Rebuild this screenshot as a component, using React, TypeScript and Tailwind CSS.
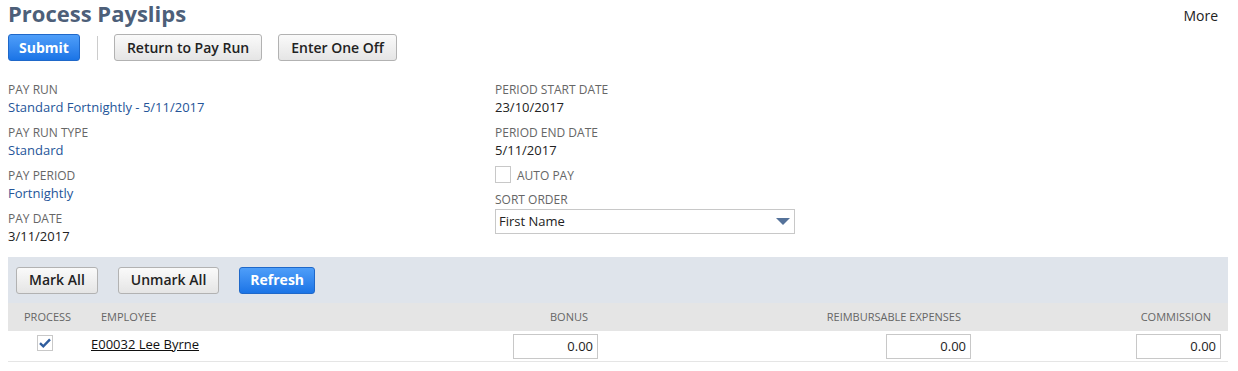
import React from "react";

const font = { fontFamily: '"Open Sans", "Liberation Sans", sans-serif' };

function GrayBtn({ children }: { children: React.ReactNode }) {
  return (
    <button className="h-[27px] px-[12px] rounded-[3px] border border-[#b2b2b2] bg-gradient-to-b from-[#fafafa] to-[#e5e5e5] text-[14px] font-semibold text-[#222] leading-none whitespace-nowrap">
      {children}
    </button>
  );
}

function BlueBtn({ children }: { children: React.ReactNode }) {
  return (
    <button className="h-[27px] px-[10px] rounded-[3px] border border-[#1f68c9] bg-gradient-to-b from-[#4e9ef9] to-[#1a74e6] text-[14px] font-bold text-white leading-none whitespace-nowrap">
      {children}
    </button>
  );
}

function Field({ label, value, blue }: { label: string; value: string; blue?: boolean }) {
  return (
    <div className="h-[43px]">
      <div className="text-[12px] leading-[17px] text-[#666] uppercase">{label}</div>
      <div className={`text-[13px] leading-[18px] ${blue ? "text-[#255599]" : "text-[#222]"}`}>{value}</div>
    </div>
  );
}

function NumBox() {
  return (
    <div className="w-[85px] h-[25px] border border-[#c8c8c8] bg-white text-right text-[13px] pr-[4px] leading-[23px] text-[#222]">
      0.00
    </div>
  );
}

export default function App() {
  return (
    <div className="w-[1238px] h-[371px] bg-white pl-[8px] pr-[10px] overflow-hidden" style={font}>
      <div className="flex justify-between items-start h-[26px] pt-[1px]">
        <h1 className="text-[22px] font-bold text-[#4d5f79] leading-[24px] whitespace-nowrap">Process Payslips</h1>
        <div className="text-[14px] text-[#222] mt-[4px] mr-[10px]">More</div>
      </div>
      <div className="flex items-center mt-[8px] h-[27px]">
        <BlueBtn>Submit</BlueBtn>
        <div className="w-px h-[24px] bg-[#ccc] ml-[17px] mr-[16px]" />
        <GrayBtn>Return to Pay Run</GrayBtn>
        <div className="w-[16px]" />
        <GrayBtn>Enter One Off</GrayBtn>
      </div>

      <div className="flex mt-[20px]">
        <div className="w-[487px]">
          <Field label="Pay Run" value="Standard Fortnightly - 5/11/2017" blue />
          <Field label="Pay Run Type" value="Standard" blue />
          <Field label="Pay Period" value="Fortnightly" blue />
          <Field label="Pay Date" value="3/11/2017" />
        </div>
        <div className="w-[300px]">
          <Field label="Period Start Date" value="23/10/2017" />
          <Field label="Period End Date" value="5/11/2017" />
          <div className="flex items-end h-[25px] -mt-[9px]">
            <div className="w-[16px] h-[17px] border border-[#c8c8c8] bg-white" />
            <span className="ml-[6px] text-[12px] text-[#666] leading-[14px]">AUTO PAY</span>
          </div>
          <div className="text-[12px] leading-[17px] text-[#666] mt-[8px]">SORT ORDER</div>
          <div className="h-[25px] border border-[#c8c8c8] flex items-center justify-between pl-[3px] pr-[4px] mt-[1px]">
            <span className="text-[13px] text-[#222]">First Name</span>
            <svg width="14" height="8" viewBox="0 0 14 8">
              <polygon points="0,0 14,0 7,7" fill="#55729a" />
            </svg>
          </div>
        </div>
      </div>

      <div className="mt-[4px] bg-[#dfe4eb] h-[46px] flex items-center gap-[20px] px-[8px]">
        <GrayBtn>Mark All</GrayBtn>
        <GrayBtn>Unmark All</GrayBtn>
        <BlueBtn>Refresh</BlueBtn>
      </div>
      <div className="bg-[#e5e5e5] h-[28px] flex items-center text-[11px] text-[#666] uppercase whitespace-nowrap">
        <div className="w-[83px] pl-[16px]">Process</div>
        <div className="w-[422px] pl-[10px]">Employee</div>
        <div className="w-[84px] text-right pr-[9px]">Bonus</div>
        <div className="w-[373px] text-right pr-[9px]">Reimbursable Expenses</div>
        <div className="w-[258px] text-right pr-[17px]">Commission</div>
      </div>
      <div className="h-[31px] flex items-start pt-[3px] border-b border-[#e5e5e5]">
        <div className="w-[83px] pl-[29px] pt-[1px]">
          <div className="w-[16px] h-[16px] border border-[#c8c8c8] bg-white flex items-center justify-center">
            <svg width="12" height="10" viewBox="0 0 12 10">
              <path d="M1 5.2 L4.3 8.3 L11 1.3" stroke="#2f5d9e" strokeWidth="2.4" fill="none" />
            </svg>
          </div>
        </div>
        <div className="w-[422px] leading-[18px]">
          <span className="text-[13px] text-[#111] underline">E00032 Lee Byrne</span>
        </div>
        <NumBox />
        <div className="w-[288px]" />
        <NumBox />
        <div className="w-[165px]" />
        <NumBox />
      </div>
    </div>
  );
}
